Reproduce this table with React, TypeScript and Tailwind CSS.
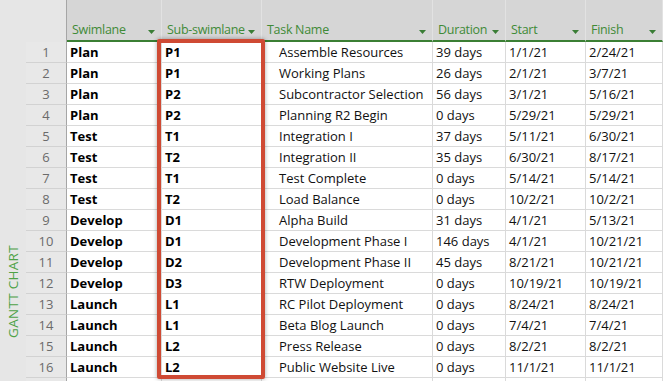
import React from 'react';

type Task = [string, string, string, string, string, string];

const tasks: Task[] = [
  ['Plan', 'P1', 'Assemble Resources', '39 days', '1/1/21', '2/24/21'],
  ['Plan', 'P1', 'Working Plans', '26 days', '2/1/21', '3/7/21'],
  ['Plan', 'P2', 'Subcontractor Selection', '56 days', '3/1/21', '5/16/21'],
  ['Plan', 'P2', 'Planning R2 Begin', '0 days', '5/29/21', '5/29/21'],
  ['Test', 'T1', 'Integration I', '37 days', '5/11/21', '6/30/21'],
  ['Test', 'T2', 'Integration II', '35 days', '6/30/21', '8/17/21'],
  ['Test', 'T1', 'Test Complete', '0 days', '5/14/21', '5/14/21'],
  ['Test', 'T2', 'Load Balance', '0 days', '10/2/21', '10/2/21'],
  ['Develop', 'D1', 'Alpha Build', '31 days', '4/1/21', '5/13/21'],
  ['Develop', 'D1', 'Development Phase I', '146 days', '4/1/21', '10/21/21'],
  ['Develop', 'D2', 'Development Phase II', '45 days', '8/21/21', '10/21/21'],
  ['Develop', 'D3', 'RTW Deployment', '0 days', '10/19/21', '10/19/21'],
  ['Launch', 'L1', 'RC Pilot Deployment', '0 days', '8/24/21', '8/24/21'],
  ['Launch', 'L1', 'Beta Blog Launch', '0 days', '7/4/21', '7/4/21'],
  ['Launch', 'L2', 'Press Release', '0 days', '8/2/21', '8/2/21'],
  ['Launch', 'L2', 'Public Website Live', '0 days', '11/1/21', '11/1/21'],
];

const headers = ['Swimlane', 'Sub-swimlane', 'Task Name', 'Duration', 'Start', 'Finish'];

function DropArrow() {
  return (
    <svg width="7" height="4" viewBox="0 0 7 4" className="mb-[4px] shrink-0">
      <path d="M0 0 H7 L3.5 4 Z" fill="#3a7d35" />
    </svg>
  );
}

function HeaderCell({ label }: { label: string }) {
  return (
    <div className="flex h-[42px] items-end justify-between gap-[3px] border-b-2 border-r border-b-[#3b7f34] border-r-[#e2e2e2] bg-[#d6d6d6] pb-[2px] pl-[5px] pr-[6px]">
      <span className="whitespace-nowrap text-[12.5px] leading-[16px] tracking-[-0.3px] text-[#3f8a37]">{label}</span>
      <DropArrow />
    </div>
  );
}

function Cell({ children, bold, indent }: { children?: React.ReactNode; bold?: boolean; indent?: boolean }) {
  return (
    <div
      className={`flex h-[21px] items-center overflow-hidden whitespace-nowrap border-b border-r border-[#dadada] bg-white leading-[20px] text-[#111] ${
        bold ? 'font-bold text-black' : ''
      } ${indent ? 'pl-[17px]' : 'pl-[3px]'}`}
    >
      {children}
    </div>
  );
}

export default function App() {
  return (
    <div
      className="flex h-[381px] w-[663px] overflow-hidden bg-[#e8e8e8] text-[13px]"
      style={{ fontFamily: '"Open Sans", "Noto Sans", sans-serif' }}
    >
      {/* Gantt chart side label */}
      <div className="flex w-[26px] shrink-0 flex-col justify-end bg-[#e6e6e6] pb-[43px]">
        <span className="rotate-180 self-center text-[13.5px] leading-[16px] tracking-[0.3px] text-[#4ea246] [writing-mode:vertical-rl]">
          GANTT CHART
        </span>
      </div>

      {/* Task sheet */}
      <div className="relative flex-1">
        <div className="grid grid-cols-[41px_95px_100px_171px_73px_80px_77px]">
          <div className="h-[42px] border-r border-[#a6a6a6] bg-[#e6e6e6]" />
          {headers.map((h) => (
            <HeaderCell key={h} label={h} />
          ))}

          {tasks.map((t, i) => (
            <React.Fragment key={i}>
              <div className="flex h-[21px] items-center justify-center border-b border-r border-b-[#d2d2d2] border-r-[#a6a6a6] bg-[#e8e8e8] leading-[20px] text-[#6b6b6b]">
                {i + 1}
              </div>
              <Cell bold>{t[0]}</Cell>
              <Cell bold>{t[1]}</Cell>
              <Cell indent>{t[2]}</Cell>
              <Cell>{t[3]}</Cell>
              <Cell>{t[4]}</Cell>
              <Cell>{t[5]}</Cell>
            </React.Fragment>
          ))}

          <div className="h-[21px] border-r border-[#a6a6a6] bg-[#e8e8e8]" />
          {headers.map((h) => (
            <Cell key={'empty-' + h} />
          ))}
        </div>

        {/* Highlight around the Sub-swimlane column */}
        <div className="pointer-events-none absolute left-[131px] top-[39px] h-[340px] w-[108px] rounded-[2px] border-4 border-[#cf4a34] shadow-[0_0_4px_rgba(0,0,0,0.35)]" />
      </div>
    </div>
  );
}
